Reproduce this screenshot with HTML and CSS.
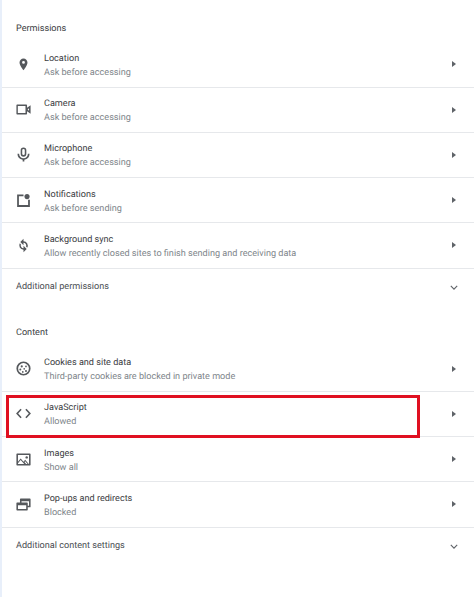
FILE: index.html
```html
<!DOCTYPE html>
<html lang="en">
<head>
    <meta charset="UTF-8">
    <meta name="viewport" content="width=device-width, initial-scale=1.0">
    <title>Site settings</title>
    <link rel="stylesheet" href="styles.css">
</head>
<body>
    <main class="page">
        <h2 class="section-title first">Permissions</h2>
        <div class="list">
            <div class="row">
                <svg class="icon" viewBox="0 0 24 24"><path fill-rule="evenodd" d="M12 3.500c-3.100 0-5.600 2.500-5.600 5.600 0 4.200 5.600 10.900 5.600 10.900s5.600-6.700 5.600-10.900c0-3.100-2.500-5.600-5.600-5.600zm0 7.600a2 2 0 1 1 0-4 2 2 0 0 1 0 4z"/></svg>
                <div class="text"><div class="name">Location</div><div class="desc">Ask before accessing</div></div>
                <span class="arrow"></span>
            </div>
            <div class="row">
                <svg class="icon" viewBox="0 0 24 24"><path fill-rule="evenodd" d="M3 5h13a1 1 0 0 1 1 1v3.500L22 6v12l-5-3.500V18a1 1 0 0 1-1 1H3a1 1 0 0 1-1-1V6a1 1 0 0 1 1-1zm1 2.200v9.600h10.800V7.200H4zm15.800 3-2 1.800 2 1.800v-3.600z"/></svg>
                <div class="text"><div class="name">Camera</div><div class="desc">Ask before accessing</div></div>
                <span class="arrow"></span>
            </div>
            <div class="row">
                <svg class="icon" viewBox="0 0 24 24"><path fill-rule="evenodd" d="M12 15a4 4 0 0 0 4-4V6a4 4 0 0 0-8 0v5a4 4 0 0 0 4 4zm-1.800-9a1.800 1.800 0 0 1 3.600 0v5a1.800 1.800 0 0 1-3.600 0V6z"/><path d="M18.200 11a6.200 6.200 0 0 1-12.400 0H3.500a8.500 8.500 0 0 0 7.300 8.400V22h2.400v-2.600a8.500 8.500 0 0 0 7.300-8.400h-2.300z"/></svg>
                <div class="text"><div class="name">Microphone</div><div class="desc">Ask before accessing</div></div>
                <span class="arrow"></span>
            </div>
            <div class="row">
                <svg class="icon" viewBox="0 0 24 24"><circle cx="17" cy="6.500" r="3.600"/><path d="M3 3.500h9V6H5.500v12.500h13V11H21v10H3z"/></svg>
                <div class="text"><div class="name">Notifications</div><div class="desc">Ask before sending</div></div>
                <span class="arrow"></span>
            </div>
            <div class="row">
                <svg class="icon" viewBox="0 0 24 24"><path d="M12 6V2.500L7.500 7l4.500 4.500V8.200a3.900 3.900 0 0 1 3.600 5.300l1.600 1.600A6 6 0 0 0 12 6zm0 9.800a3.900 3.900 0 0 1-3.600-5.300L6.800 8.900A6 6 0 0 0 12 18v3.500l4.500-4.500L12 12.500v3.300z"/></svg>
                <div class="text"><div class="name">Background sync</div><div class="desc">Allow recently closed sites to finish sending and receiving data</div></div>
                <span class="arrow"></span>
            </div>
            <div class="row expand">
                <span class="expand-label">Additional permissions</span>
                <svg class="chevron" viewBox="0 0 10 6"><path d="M1 1l4 4 4-4"/></svg>
            </div>
        </div>

        <h2 class="section-title">Content</h2>
        <div class="list">
            <div class="row">
                <svg class="icon" viewBox="0 0 24 24"><path fill-rule="evenodd" d="M12 2a10 10 0 1 0 0 20 10 10 0 0 0 0-20zm0 2.400a7.600 7.600 0 1 1 0 15.200 7.600 7.600 0 0 1 0-15.200z"/><circle cx="9.500" cy="9" r="1.500"/><circle cx="7.500" cy="13.500" r="1.400"/><circle cx="13" cy="12.500" r="1.200"/><circle cx="15.500" cy="9" r="1.200"/><circle cx="15.500" cy="15.500" r="1.400"/><circle cx="11" cy="16.800" r="1.200"/></svg>
                <div class="text"><div class="name">Cookies and site data</div><div class="desc">Third-party cookies are blocked in private mode</div></div>
                <span class="arrow"></span>
            </div>
            <div class="row">
                <svg class="icon" viewBox="0 0 24 24"><path d="M9.400 17.200 4.500 12l4.900-5.200L7.800 5.200 1.500 12l6.300 6.800zm5.200 0 4.900-5.200-4.900-5.200 1.600-1.600 6.300 6.800-6.300 6.800z"/></svg>
                <div class="text"><div class="name">JavaScript</div><div class="desc">Allowed</div></div>
                <span class="arrow"></span>
                <div class="red-box"></div>
            </div>
            <div class="row">
                <svg class="icon" viewBox="0 0 24 24"><path fill-rule="evenodd" d="M3 3.500h18a1 1 0 0 1 1 1v15a1 1 0 0 1-1 1H3a1 1 0 0 1-1-1v-15a1 1 0 0 1 1-1zm1.200 2.200v9.500l3.800-4.700 4 4.500 2.300-2.700 5.500 6.300V5.700H4.200zM17.800 18.300l-3.500-4-1 1.200 2.400 2.800h2.100zm-4.800 0L8 12.700l-3.800 4.600v1H13z"/><circle cx="16.500" cy="9" r="1.700"/></svg>
                <div class="text"><div class="name">Images</div><div class="desc">Show all</div></div>
                <span class="arrow"></span>
            </div>
            <div class="row">
                <svg class="icon" viewBox="0 0 24 24"><path fill-rule="evenodd" d="M8 3.500h13a1 1 0 0 1 1 1V15a1 1 0 0 1-1 1h-3v3.500a1 1 0 0 1-1 1H3a1 1 0 0 1-1-1V10a1 1 0 0 1 1-1h4V4.500a1 1 0 0 1 1-1zM9.200 9H17a1 1 0 0 1 1 1v3.800h1.800V7.500H9.200V9zM4.200 13v5.300h11.600V13H4.200z"/></svg>
                <div class="text"><div class="name">Pop-ups and redirects</div><div class="desc">Blocked</div></div>
                <span class="arrow"></span>
            </div>
            <div class="row expand">
                <span class="expand-label">Additional content settings</span>
                <svg class="chevron" viewBox="0 0 10 6"><path d="M1 1l4 4 4-4"/></svg>
            </div>
        </div>
    </main>
</body>
</html>
```

FILE: styles.css
```css
html, body {
    margin: 0;
    height: 100%;
    overflow: hidden;
}

body {
    background-color: #fff;
    border-left: 2px solid #e8effa;
    box-sizing: border-box;
    font-family: Roboto, "Noto Sans", sans-serif;
    font-size: 9.1px;
    text-rendering: geometricPrecision;
}

.section-title {
    margin: 0;
    height: 43px;
    box-sizing: border-box;
    padding: 15px 0 0 14px;
    display: flex;
    align-items: center;
    font-size: 9.1px;
    font-weight: 400;
    color: #3c4043;
}

.section-title.first {
    height: 42.25px;
    padding-top: 15px;
}

.row {
    position: relative;
    display: flex;
    align-items: center;
    height: 45.25px;
    box-sizing: border-box;
    padding: 0 17px 0 13px;
    border-bottom: 1px solid #e6e8eb;
}

.icon {
    width: 17px;
    height: 17px;
    margin-right: 12px;
    fill: #55585c;
    flex: none;
}

.text {
    flex: 1;
    padding-top: 3px;
    line-height: 14px;
}

.name {
    color: #3c4043;
}

.desc {
    color: #80868b;
}

.arrow {
    width: 0;
    height: 0;
    border-left: 4px solid #5f6368;
    border-top: 3.500px solid transparent;
    border-bottom: 3.500px solid transparent;
    margin-right: 1px;
}

.expand {
    height: 35px;
    justify-content: space-between;
    padding: 2px 16px 0 14px;
    border-bottom: none;
}

.expand-label {
    color: #4a4e52;
}

.chevron {
    width: 8px;
    height: 5px;
    fill: none;
    stroke: #5f6368;
    stroke-width: 1.400;
}

/* annotation drawn over the JavaScript row */
.red-box {
    position: absolute;
    z-index: 1;
    left: 4px;
    top: 3px;
    width: 414px;
    height: 43px;
    box-sizing: border-box;
    border: 3px solid #e01021;
}
```
